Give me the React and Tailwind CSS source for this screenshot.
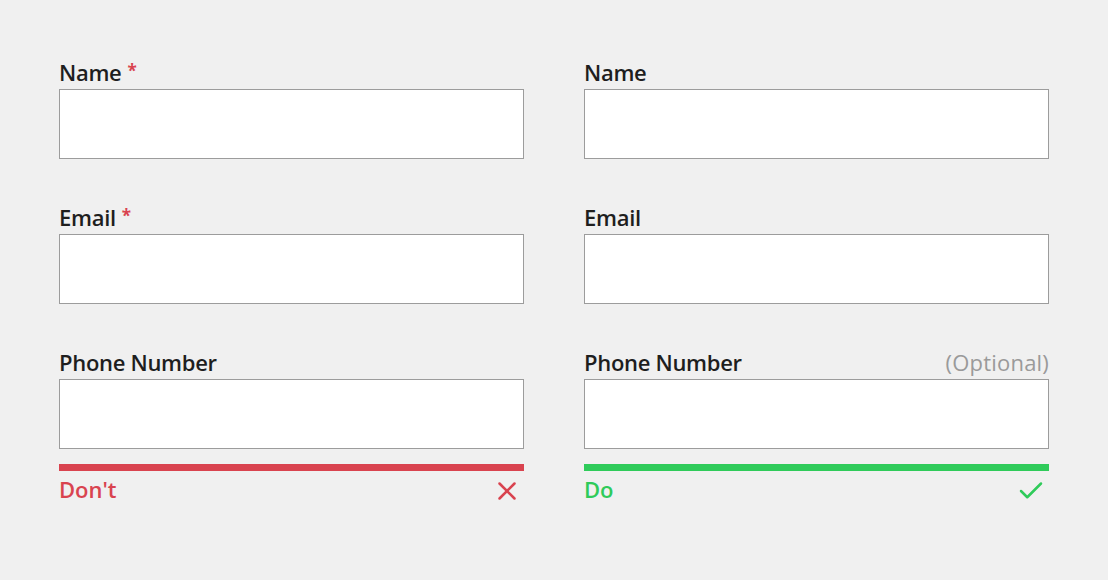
import { X, Check } from 'lucide-react';

const Field = ({ label, required, optional, first }) => (
  <div className={first ? '' : 'mt-[46px]'}>
    <div className="flex items-end justify-between h-[24px] leading-[24px]">
      <span className="text-[22px] font-semibold text-[#1e1e1e] tracking-[-0.3px]">
        {label}
        {required && (
          <span className="text-[17px] leading-none font-bold text-[#d9434f] ml-[6px] relative -top-[4px]">*</span>
        )}
      </span>
      {optional && <span className="text-[22px] text-[#9a9a9a] tracking-[0.2px]">(Optional)</span>}
    </div>
    <div className="mt-[5px] h-[70px] bg-white border border-[#9c9c9c]" />
  </div>
);

const Column = ({ good }) => (
  <div>
    <Field label="Name" required={!good} first />
    <Field label="Email" required={!good} />
    <Field label="Phone Number" optional={good} />
    <div className={`mt-[15px] h-[7px] ${good ? 'bg-[#2fcb5a]' : 'bg-[#d9434f]'}`} />
    <div className="mt-[6px] flex items-center justify-between h-[24px]">
      <span className={`text-[22px] font-semibold ${good ? 'text-[#2fcb5a]' : 'text-[#d9434f]'}`}>
        {good ? 'Do' : "Don't"}
      </span>
      {good ? (
        <Check className="w-[30px] h-[30px] text-[#2fcb5a] mr-[3px] mt-[4px]" strokeWidth={2} />
      ) : (
        <X className="w-[30px] h-[30px] text-[#d9434f] mr-[2px] mt-[4px]" strokeWidth={2} />
      )}
    </div>
  </div>
);

export default function App() {
  return (
    <div
      className="w-[1108px] h-[580px] bg-[#f0f0f0] pt-[60px] pl-[59px]"
      style={{ fontFamily: '"Open Sans", "Noto Sans", sans-serif' }}
    >
      <div className="grid grid-cols-[465px_465px] gap-x-[60px]">
        <Column />
        <Column good />
      </div>
    </div>
  );
}
